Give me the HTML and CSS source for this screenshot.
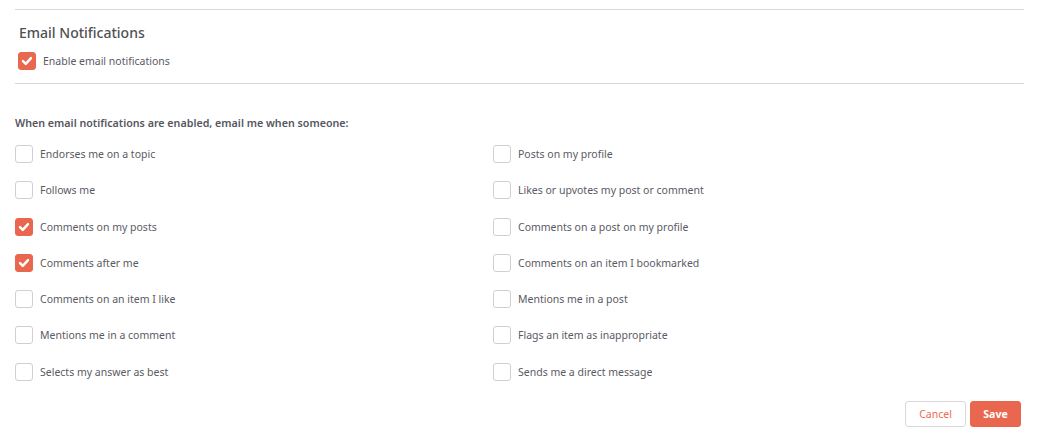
FILE: index.html
```html
<!DOCTYPE html>
<html>
<head>
<meta charset="utf-8">
<link rel="stylesheet" href="styles.css">
</head>
<body>
<div class="page">
  <div class="rule rule-top"></div>
  <section class="master">
    <h2 class="title">Email Notifications</h2>
    <label class="option">
      <span class="box checked"><svg viewBox="0 0 18 18"><path d="M4.5 9.2 L7.6 12.2 L13.5 5.8" /></svg></span>
      <span class="label">Enable email notifications</span>
    </label>
  </section>
  <div class="rule"></div>
  <p class="intro">When email notifications are enabled, email me when someone:</p>
  <div class="grid">
    <label class="option"><span class="box"></span><span class="label">Endorses me on a topic</span></label>
    <label class="option"><span class="box"></span><span class="label">Posts on my profile</span></label>
    <label class="option"><span class="box"></span><span class="label">Follows me</span></label>
    <label class="option"><span class="box"></span><span class="label">Likes or upvotes my post or comment</span></label>
    <label class="option"><span class="box checked"><svg viewBox="0 0 18 18"><path d="M4.5 9.2 L7.6 12.2 L13.5 5.8" /></svg></span><span class="label">Comments on my posts</span></label>
    <label class="option"><span class="box"></span><span class="label">Comments on a post on my profile</span></label>
    <label class="option"><span class="box checked"><svg viewBox="0 0 18 18"><path d="M4.5 9.2 L7.6 12.2 L13.5 5.8" /></svg></span><span class="label">Comments after me</span></label>
    <label class="option"><span class="box"></span><span class="label">Comments on an item I bookmarked</span></label>
    <label class="option"><span class="box"></span><span class="label">Comments on an item I like</span></label>
    <label class="option"><span class="box"></span><span class="label">Mentions me in a post</span></label>
    <label class="option"><span class="box"></span><span class="label">Mentions me in a comment</span></label>
    <label class="option"><span class="box"></span><span class="label">Flags an item as inappropriate</span></label>
    <label class="option"><span class="box"></span><span class="label">Selects my answer as best</span></label>
    <label class="option"><span class="box"></span><span class="label">Sends me a direct message</span></label>
  </div>
  <div class="actions">
    <button class="btn cancel">Cancel</button>
    <button class="btn save">Save</button>
  </div>
</div>
</body>
</html>
```
FILE: styles.css
```css
html, body {
  margin: 0;
  padding: 0;
  background: #ffffff;
}
body {
  font-family: "Noto Sans", "DejaVu Sans", sans-serif;
  color: #5a5a64;
}
.page {
  padding: 9px 18px 0 15px;
}
.rule {
  border-top: 1px solid #d8d8d8;
  height: 0;
}
.master {
  padding: 14px 0 13px 3px;
}
.title {
  margin: 0 0 10px 1px;
  font-size: 14px;
  font-weight: 500;
  color: #4f4f55;
  line-height: 18px;
}
.option {
  display: flex;
  align-items: center;
  gap: 7px;
  height: 18px;
}
.box {
  width: 16px;
  height: 16px;
  border: 1px solid #cfcfd4;
  border-radius: 3px;
  background: #fff;
  flex: none;
  display: flex;
  align-items: center;
  justify-content: center;
}
.box.checked {
  background: #e9664f;
  border-color: #e9664f;
}
.box svg {
  width: 18px;
  height: 18px;
}
.box svg path {
  fill: none;
  stroke: #fff;
  stroke-width: 2.8;
  stroke-linecap: round;
  stroke-linejoin: round;
}
.label {
  font-size: 10.5px;
  line-height: 14px;
}
.intro {
  margin: 32px 0 15px 0;
  font-size: 10.7px;
  font-weight: 600;
  color: #56565f;
  line-height: 14px;
}
.grid {
  display: grid;
  grid-template-columns: 478px 1fr;
  row-gap: 18.3px;
}
.actions {
  display: flex;
  justify-content: flex-end;
  gap: 4px;
  margin-top: 20px;
  padding-right: 3px;
}
.btn {
  height: 26px;
  border-radius: 3px;
  font-family: inherit;
  font-size: 10.5px;
  padding: 0;
  cursor: pointer;
}
.cancel {
  width: 61px;
  background: #fff;
  border: 1px solid #d8d8dc;
  color: #ec6a55;
}
.save {
  width: 51px;
  background: #e9664f;
  border: 1px solid #e9664f;
  color: #fff;
  font-weight: 700;
}
```
